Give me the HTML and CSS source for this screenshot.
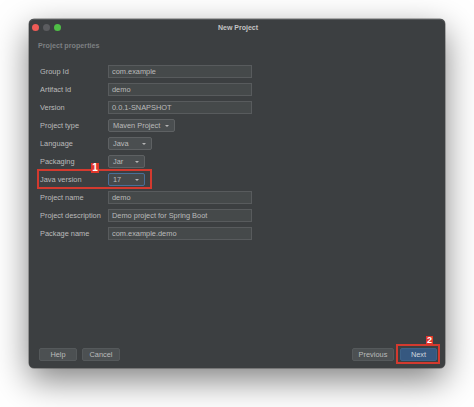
FILE: index.html
```html
<!DOCTYPE html>
<html>
<head>
<meta charset="utf-8">
<title>New Project</title>
<link rel="stylesheet" href="styles.css">
</head>
<body>
<div class="window">
  <div class="titlebar">
    <div class="lights">
      <span class="light red"></span>
      <span class="light grey"></span>
      <span class="light green"></span>
    </div>
    <div class="title">New Project</div>
  </div>
  <div class="heading">Project properties</div>
  <div class="form">
    <div class="label">Group Id</div>
    <div class="cell"><div class="field">com.example</div></div>
    <div class="label">Artifact Id</div>
    <div class="cell"><div class="field">demo</div></div>
    <div class="label">Version</div>
    <div class="cell"><div class="field">0.0.1-SNAPSHOT</div></div>
    <div class="label">Project type</div>
    <div class="cell"><div class="combo w-maven">Maven Project<span class="arrow"></span></div></div>
    <div class="label">Language</div>
    <div class="cell"><div class="combo w-java">Java<span class="arrow"></span></div></div>
    <div class="label">Packaging</div>
    <div class="cell"><div class="combo w-jar">Jar<span class="arrow"></span></div></div>
    <div class="label">Java version</div>
    <div class="cell"><div class="combo w-jar focus">17<span class="arrow"></span></div></div>
    <div class="label">Project name</div>
    <div class="cell"><div class="field">demo</div></div>
    <div class="label">Project description</div>
    <div class="cell"><div class="field">Demo project for Spring Boot</div></div>
    <div class="label">Package name</div>
    <div class="cell"><div class="field">com.example.demo</div></div>
  </div>
  <div class="spacer"></div>
  <div class="footer">
    <div class="group">
      <div class="btn w-help">Help</div>
      <div class="btn w-cancel">Cancel</div>
    </div>
    <div class="group group-right">
      <div class="btn w-prev">Previous</div>
      <div class="btn primary w-next">Next</div>
    </div>
  </div>

  <div class="mark mark-1"></div>
  <div class="badge badge-1">1</div>
  <div class="mark mark-2"></div>
  <div class="badge badge-2">2</div>
</div>
</body>
</html>
```

FILE: styles.css
```css
html, body {
  margin: 0;
  padding: 0;
  background: #ffffff;
}

body {
  width: 474px;
  height: 407px;
  overflow: hidden;
  font-family: "Liberation Sans", Arial, sans-serif;
  color: #bbbbbb;
}

.window {
  position: relative;
  margin: 19px 0 0 29px;
  width: 416px;
  height: 349px;
  background: #3c3f41;
  border-radius: 5px;
  box-shadow: 0 12px 34px rgba(0, 0, 0, 0.5), 0 0 0 0.5px rgba(0, 0, 0, 0.5);
  display: flex;
  flex-direction: column;
  box-sizing: border-box;
}

.titlebar {
  position: relative;
  height: 16px;
  display: flex;
  align-items: center;
  justify-content: center;
  border-top: 1px solid #55585a;
  border-radius: 5px 5px 0 0;
  box-sizing: border-box;
}

.lights {
  position: absolute;
  left: 3px;
  top: 4px;
  display: flex;
  gap: 4px;
}

.light {
  width: 7px;
  height: 7px;
  border-radius: 50%;
  display: block;
}

.red { background: #ee5b56; }
.grey { background: #5b5c5f; }
.green { background: #4fbf46; }

.title {
  font-size: 7px;
  font-weight: bold;
  color: #c4c4c4;
  line-height: 10px;
  margin-left: 2px;
}

.heading {
  padding: 6px 0 0 9px;
  font-size: 7.2px;
  font-weight: bold;
  line-height: 10px;
  color: #7c7f82;
}

.form {
  margin-top: 11.5px;
  padding-left: 11px;
  display: grid;
  grid-template-columns: 68px 1fr;
  grid-auto-rows: 18px;
  align-items: center;
  font-size: 7.4px;
}

.label {
  line-height: 10px;
  white-space: nowrap;
}

.cell {
  display: flex;
  align-items: center;
}

.field {
  width: 144px;
  height: 13px;
  box-sizing: border-box;
  background: #45494a;
  border: 1px solid #585b5d;
  padding-left: 3px;
  line-height: 11px;
  white-space: nowrap;
}

.combo {
  position: relative;
  height: 13px;
  box-sizing: border-box;
  background: #4a4e50;
  border: 1px solid #5e6163;
  border-radius: 2px;
  padding-left: 4px;
  line-height: 11px;
  white-space: nowrap;
}

.combo.focus {
  border-color: #4a6f98;
  background: #45494b;
}

.w-maven { width: 67px; }
.w-java { width: 44px; }
.w-jar { width: 37px; }

.arrow {
  position: absolute;
  right: 5px;
  top: 5px;
  width: 0;
  height: 0;
  border-left: 2px solid transparent;
  border-right: 2px solid transparent;
  border-top: 2px solid #b5b5b5;
}

.spacer {
  flex: 1;
}

.footer {
  display: flex;
  justify-content: space-between;
  padding: 0 8px 7px 10px;
}

.group {
  display: flex;
  gap: 5px;
}

.group-right {
  gap: 6px;
}

.btn {
  height: 13px;
  box-sizing: border-box;
  background: #4c5052;
  border: 1px solid #55595b;
  border-radius: 2px;
  font-size: 7.4px;
  line-height: 11px;
  text-align: center;
  color: #bbbbbb;
}

.btn.primary {
  background: #365880;
  border-color: #3d6288;
  color: #d0d6de;
}

.w-help { width: 38px; }
.w-cancel { width: 38px; }
.w-prev { width: 42px; }
.w-next { width: 37px; }

.mark {
  position: absolute;
  border: 2px solid #d33a2f;
  box-sizing: border-box;
}

.mark-1 {
  left: 8px;
  top: 150px;
  width: 115px;
  height: 20px;
}

.mark-2 {
  left: 367px;
  top: 325px;
  width: 44px;
  height: 20px;
}

.badge {
  position: absolute;
  background: #e0372b;
  color: #ffffff;
  font-weight: bold;
  text-align: center;
  font-family: "Liberation Sans", Arial, sans-serif;
}

.badge-1 {
  left: 62px;
  top: 144px;
  width: 8px;
  height: 10px;
  font-size: 10px;
  line-height: 10px;
}

.badge-2 {
  left: 397px;
  top: 317px;
  width: 7px;
  height: 9px;
  font-size: 9px;
  line-height: 9px;
}
```
